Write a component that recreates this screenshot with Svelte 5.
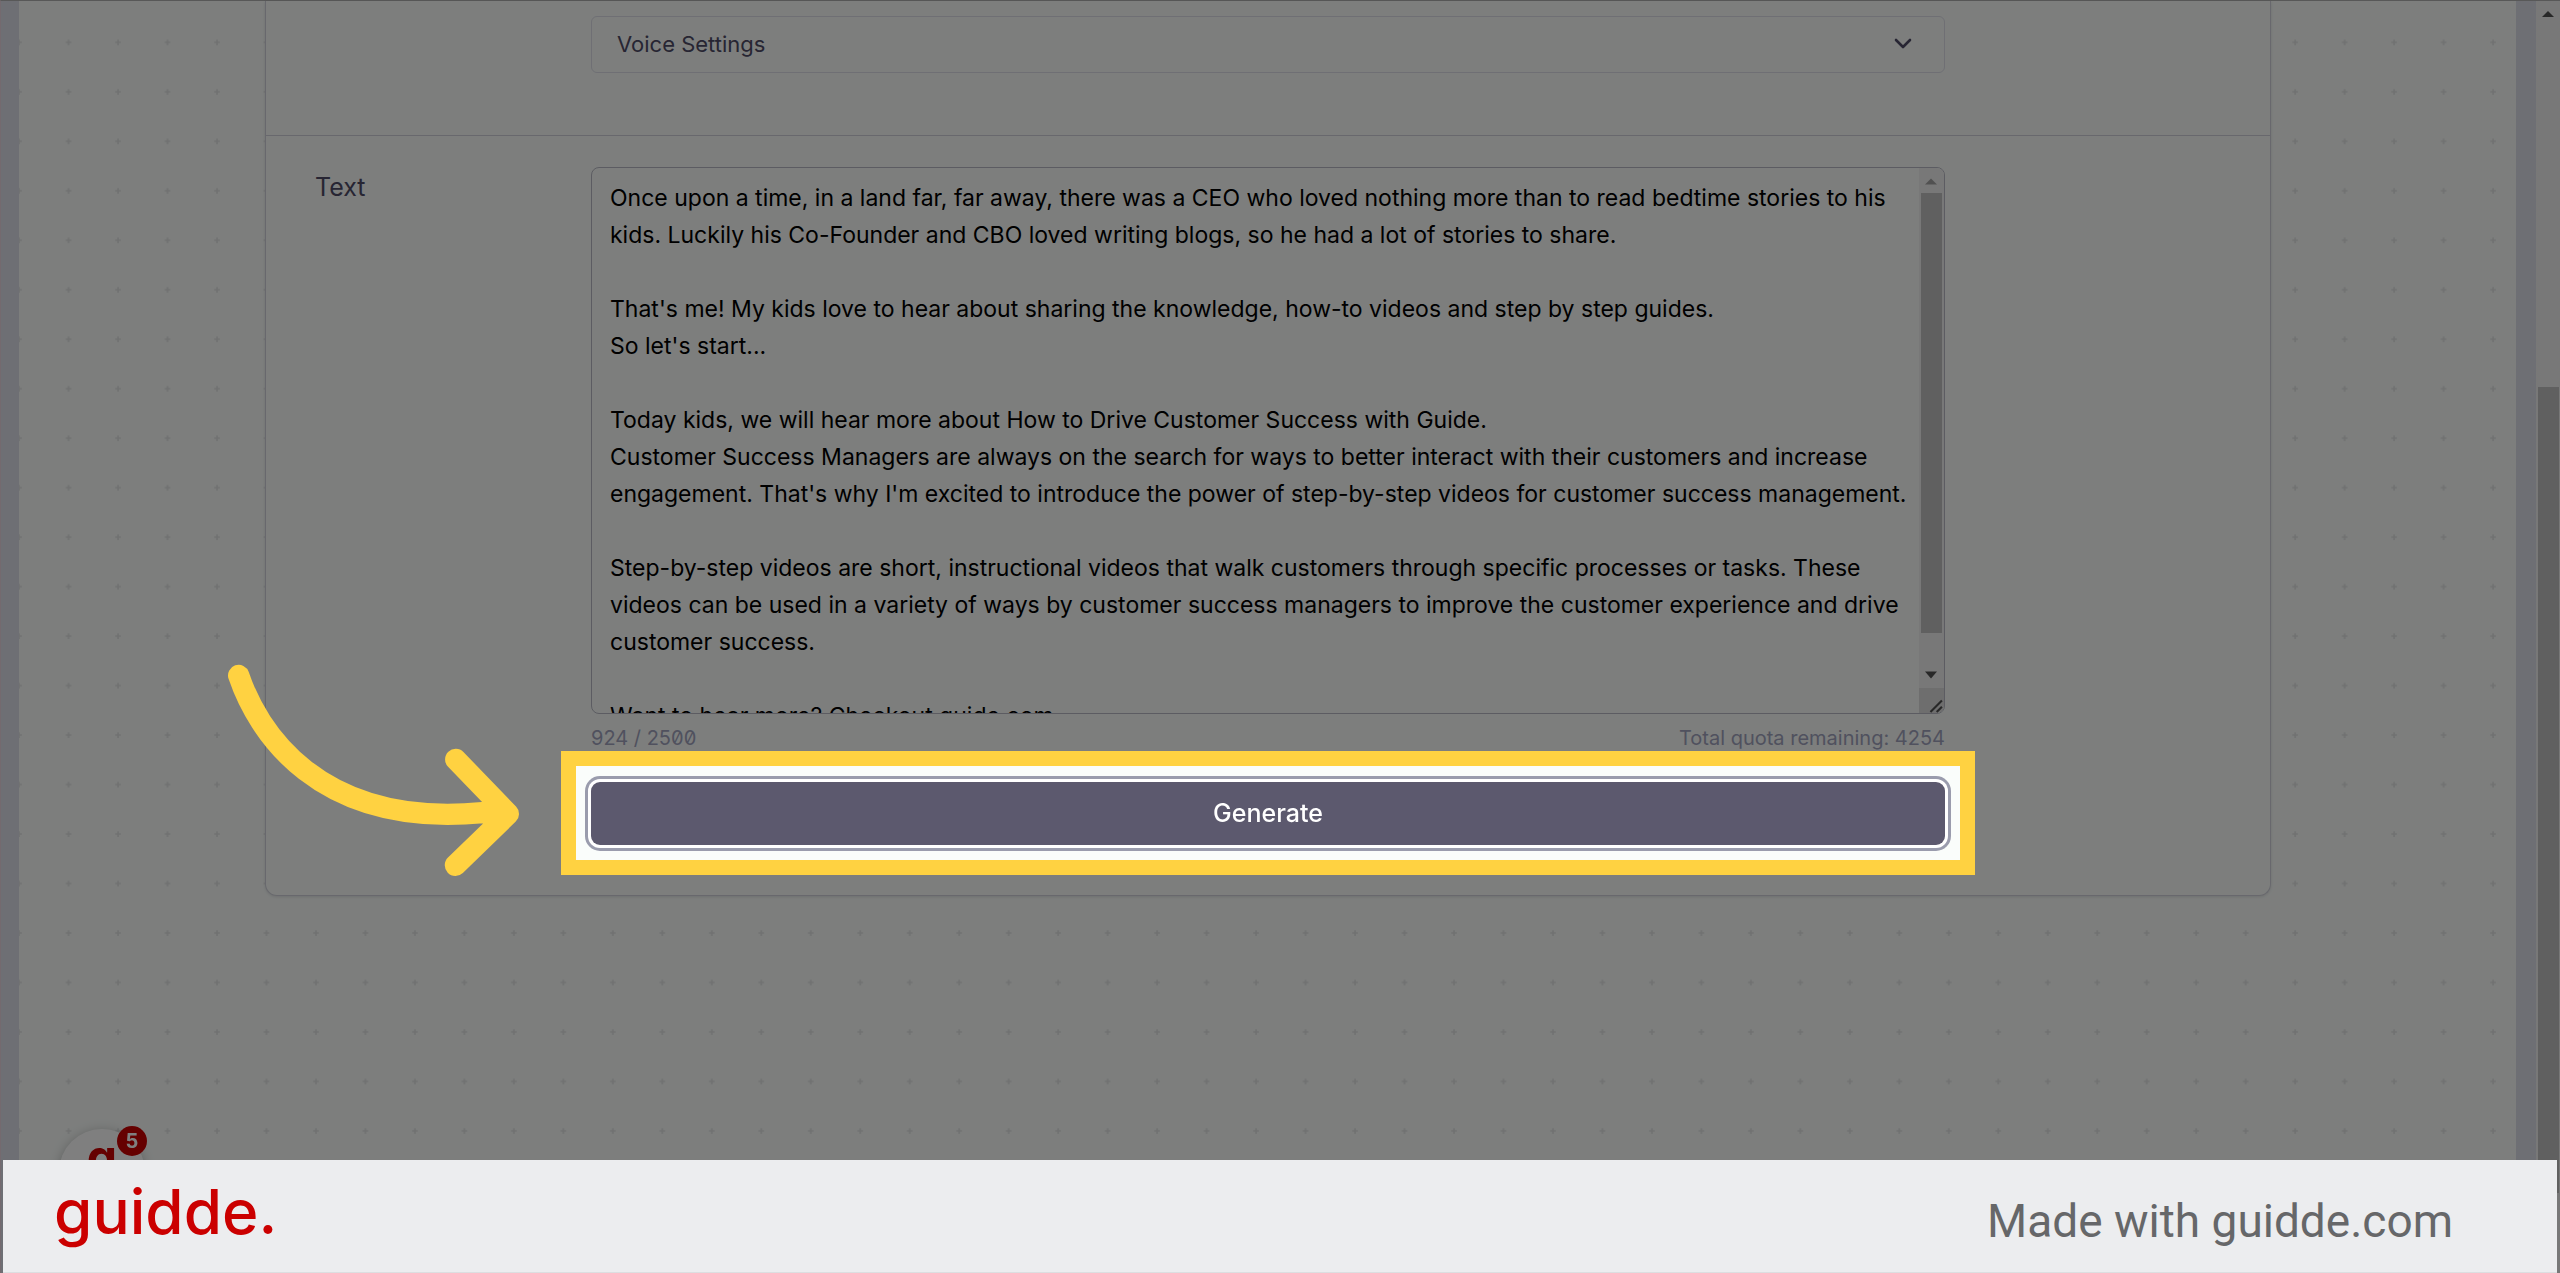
<script lang="ts">
	const quota = { limit: 2500, remaining: 4254 };
	const unread = 5;

	let used = $state(924);
	let text = $state(`Once upon a time, in a land far, far away, there was a CEO who loved nothing more than to read bedtime stories to his kids. Luckily his Co-Founder and CBO loved writing blogs, so he had a lot of stories to share.

That's me! My kids love to hear about sharing the knowledge, how-to videos and step by step guides.
So let's start...

Today kids, we will hear more about How to Drive Customer Success with Guide.
Customer Success Managers are always on the search for ways to better interact with their customers and increase engagement. That's why I'm excited to introduce the power of step-by-step videos for customer success management.

Step-by-step videos are short, instructional videos that walk customers through specific processes or tasks. These videos can be used in a variety of ways by customer success managers to improve the customer experience and drive customer success.

Want to hear more? Checkout guide.com`);
</script>

<div class="shell">
	<main class="page">
		<svg class="page__grid" aria-hidden="true">
			<defs>
				<pattern id="plus" x="-24.7" y="16.6" width="49.48" height="49.48" patternUnits="userSpaceOnUse">
					<path d="M22 24.7h5.6M24.8 22v5.6" stroke="#e2e4e4" stroke-width="1.6" />
				</pattern>
			</defs>
			<rect width="100%" height="100%" fill="url(#plus)" />
		</svg>

		<section class="card">
			<div class="row row--settings">
				<button class="disclosure" type="button">
					Voice Settings
					<svg width="18" height="12" viewBox="0 0 18 12" fill="none" aria-hidden="true">
						<path d="M2 2l7 7 7-7" stroke="#4e4b66" stroke-width="2.6" stroke-linecap="round" stroke-linejoin="round" />
					</svg>
				</button>
			</div>

			<div class="row row--text">
				<label class="row__label" for="story">Text</label>
				<div class="row__control">
					<div class="editor">
						<textarea id="story" spellcheck="false" bind:value={text}></textarea>
						<div class="editor__bar" aria-hidden="true">
							<svg class="editor__arrow" viewBox="0 0 24 24"><path d="M6 16l6-6 6 6z" fill="#a3a3a3" /></svg>
							<span class="editor__thumb"></span>
							<svg class="editor__arrow" viewBox="0 0 24 24"><path d="M6 8h12l-6 7z" fill="#505050" /></svg>
							<svg class="editor__grip" viewBox="0 0 24 24">
								<path d="M11 23L22 12M17 23l5-5" stroke="#505050" stroke-width="2" />
							</svg>
						</div>
					</div>
					<div class="counters">
						<span>{used} / {quota.limit}</span>
						<span>Total quota remaining: {quota.remaining}</span>
					</div>
					<div class="spotlight">
						<button class="generate" type="button">Generate</button>
						<svg class="spotlight__arrow" viewBox="80 70 880 642" aria-hidden="true">
							<path d="M115 107C170 270 350 567 848 519M767 359L925 523L766 677" />
						</svg>
					</div>
				</div>
			</div>
		</section>
	</main>

	<div class="scrollbar" aria-hidden="true">
		<svg class="scrollbar__arrow" viewBox="0 0 24 24"><path d="M6 16l6-6 6 6z" fill="#505050" /></svg>
		<span class="scrollbar__thumb"></span>
	</div>
</div>

<div class="launcher">
	<span class="launcher__letter">g</span>
	<span class="launcher__badge">{unread}</span>
</div>

<footer class="footer">
	<span class="footer__logo">guidde.</span>
	<span class="footer__credit">Made with guidde.com</span>
</footer>

<style>
	:global(body) {
		overflow: hidden;
		background: #fafdfb;
		font-family: Inter, 'Liberation Sans', sans-serif;
	}

	.shell {
		display: flex;
		box-sizing: border-box;
		min-height: 100vh;
		border-top: 1px solid #b0b0b0;
		border-left: 1px solid #e8d4de;
	}

	.page {
		position: relative;
		flex: 1;
		padding: 0 245px 0 246px;
		border-left: 18px solid #dddee8;
		border-right: 20px solid #dddee8;
		background: #fafdfb;
	}

	.page__grid {
		position: absolute;
		inset: 0;
		width: 100%;
		height: 100%;
	}

	.card {
		position: relative;
		border: 1px solid #d0d1da;
		border-top: 0;
		border-radius: 0 0 12px 12px;
		background: #fafdfb;
		box-shadow: 0 1px 3px rgba(20, 20, 43, 0.12);
	}

	.row {
		display: grid;
		grid-template-columns: 276fr 1354fr 276fr;
		padding: 0 49px;
	}

	.row--settings {
		padding-top: 15px;
		padding-bottom: 62px;
		border-bottom: 1px solid #d0d1da;
	}

	.row--text {
		padding-top: 31px;
		padding-bottom: 20px;
	}

	.row__label {
		padding-top: 4px;
		color: #4e4b66;
		font-size: 25px;
		line-height: 32px;
	}

	.disclosure {
		grid-column: 2;
		display: flex;
		align-items: center;
		justify-content: space-between;
		height: 57px;
		padding: 0 32px 2px 25px;
		border: 1px solid #dedfe8;
		border-radius: 6px;
		background: transparent;
		color: #4e4b66;
		font: inherit;
		font-size: 22px;
	}

	.editor {
		display: flex;
		box-sizing: border-box;
		height: 547px;
		overflow: hidden;
		border: 1px solid #b8b9c4;
		border-radius: 8px;
	}

	.editor textarea {
		flex: 1;
		box-sizing: border-box;
		padding: 12px 2px 0 18px;
		border: 0;
		outline: 0;
		resize: none;
		overflow: hidden;
		background: transparent;
		color: #000;
		font: inherit;
		font-size: 23px;
		line-height: 37px;
	}

	.editor__bar {
		display: flex;
		flex-direction: column;
		width: 25px;
		background: #f1f1f1;
	}

	.editor__arrow,
	.editor__grip {
		flex: none;
		width: 24px;
		height: 25px;
	}

	.editor__grip {
		width: 25px;
		background: #dcdcdc;
	}

	.editor__thumb {
		flex: 1;
		margin: 0 2px 30px;
		background: #c1c1c1;
	}

	.counters {
		display: flex;
		justify-content: space-between;
		padding-top: 11px;
		color: #a0a3bd;
		font-size: 20px;
		font-variant-numeric: slashed-zero;
		line-height: 26px;
	}

	/* Everything outside the box is dimmed by its spread shadow */
	.spotlight {
		position: relative;
		z-index: 2;
		margin: 0 -30px;
		padding: 16px 15px 15px;
		border: 15px solid #ffd241;
		background: #fafdfb;
		box-shadow: 0 0 0 9999px rgba(0, 0, 0, 0.5);
	}

	.spotlight__arrow {
		position: absolute;
		top: -103px;
		left: -349px;
		width: 293px;
		height: 214px;
		fill: none;
		stroke: #ffd241;
		stroke-width: 64;
		stroke-linecap: round;
		stroke-linejoin: round;
	}

	.generate {
		display: block;
		width: 100%;
		height: 63px;
		padding: 0 0 2px;
		border: 0;
		border-radius: 9px;
		background: #5c596e;
		box-shadow:
			0 0 0 3px #fff,
			0 0 0 6px #9a9cad;
		color: #fff;
		font: inherit;
		font-size: 25px;
		font-weight: 500;
	}

	.scrollbar {
		display: flex;
		flex-direction: column;
		width: 24px;
		background: #f1f1f1;
	}

	.scrollbar__arrow {
		width: 24px;
		height: 24px;
	}

	.scrollbar__thumb {
		flex: 1;
		margin: 362px 1px 80px 2px;
		background: #c1c1c1;
	}

	.launcher {
		position: fixed;
		bottom: 58px;
		left: 59px;
		z-index: 1;
		width: 86px;
		height: 86px;
		border-radius: 50%;
		background: #fff;
		box-shadow: 0 2px 12px rgba(0, 0, 0, 0.25);
		color: #cb0000;
		text-align: center;
	}

	.launcher__letter {
		display: block;
		font-size: 48px;
		font-weight: 700;
		line-height: 56px;
	}

	.launcher__badge {
		position: absolute;
		top: -3px;
		right: -2px;
		width: 30px;
		height: 30px;
		border-radius: 50%;
		background: #cb0000;
		color: #fff;
		font-size: 20px;
		font-weight: 700;
		line-height: 30px;
	}

	.footer {
		position: fixed;
		right: 3px;
		bottom: 0;
		left: 3px;
		z-index: 3;
		display: flex;
		align-items: center;
		justify-content: space-between;
		box-sizing: border-box;
		height: 113px;
		padding: 0 104px 0 51px;
		border-bottom: 1px solid #dcdee0;
		background: #ecedef;
	}

	.footer__logo {
		padding-bottom: 8px;
		color: #cb0000;
		font-size: 62px;
		font-weight: 500;
		line-height: 64px;
	}

	.footer__credit {
		padding-top: 10px;
		color: #666769;
		font-family: Roboto, sans-serif;
		font-size: 46px;
	}
</style>
